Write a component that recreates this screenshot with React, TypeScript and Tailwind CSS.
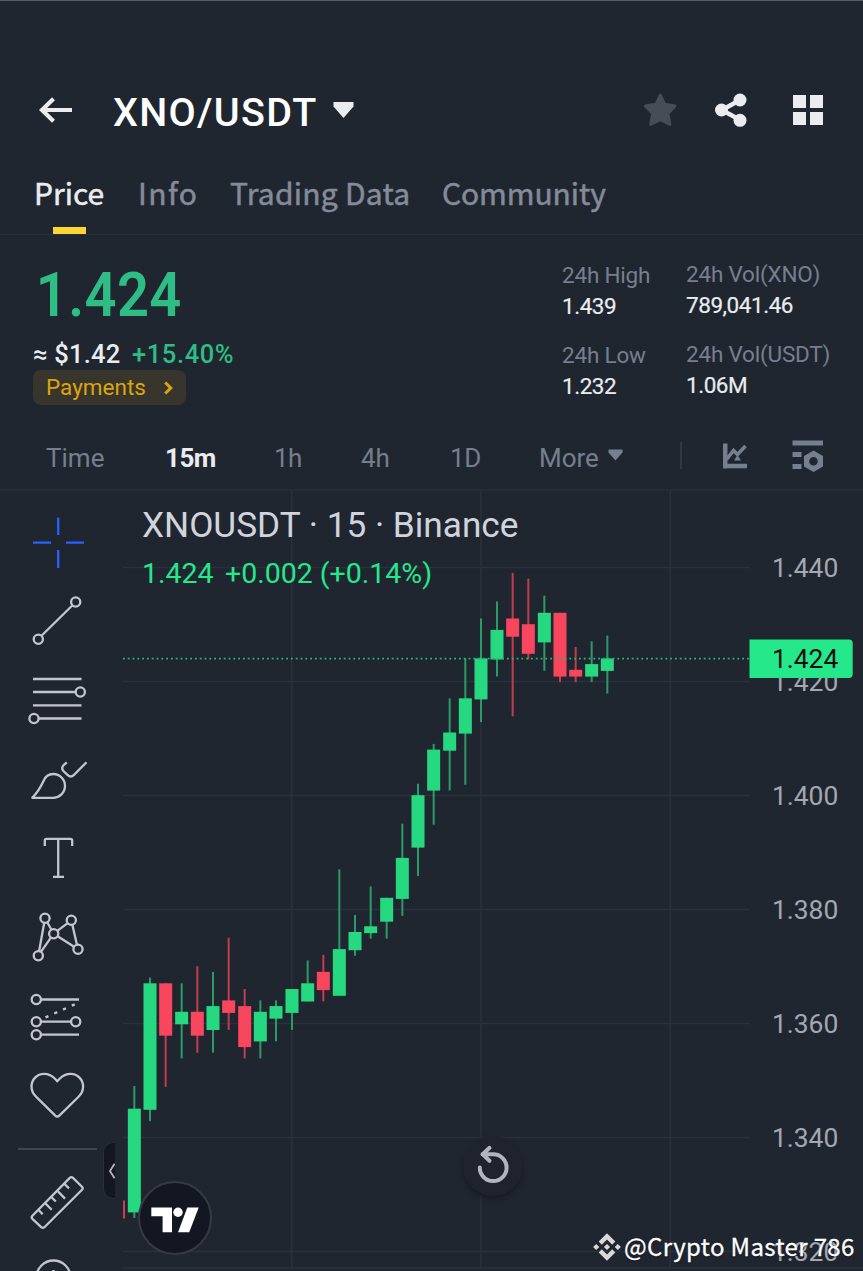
import type { ReactNode } from "react";

//////////////////Header//////////////

const Header = () => {
  return (
    <header className="flex h-[74px] items-center pl-[39px] pr-[40px]">
      <svg width="34" height="26" viewBox="0 0 34 26" fill="none" stroke="#eaecef" strokeWidth="4.2">
        <path d="M14.5 1.8 L3 13 L14.5 24.2 M3.3 13 H33" />
      </svg>
      <h1 className="ml-[40px] mt-[5px] w-[211px] whitespace-nowrap text-[39.5px] font-medium leading-[48px] tracking-[1.3px] text-white">
        XNO/USDT
      </h1>
      <svg className="ml-[9px]" width="22" height="16" viewBox="0 0 22 16" fill="#eaecef">
        <path d="M0.5 0 H20.5 V4.5 L10.5 16 L0.5 4.5 Z" />
      </svg>
      <div className="ml-auto flex items-center">
        <svg width="34" height="34" viewBox="0 0 34 34" fill="#474d57" stroke="#474d57" strokeWidth="3" strokeLinejoin="round">
          <path d="M17.3 2.2 L21.6 11.3 L32 13 L24.9 20.5 L26.9 31.4 L17.3 26.7 L7.7 31.4 L9.7 20.5 L2.3 13 L13 11.3 Z" />
        </svg>
        <svg className="ml-[37px]" width="34" height="34" viewBox="0 0 34 34" fill="#eaecef">
          <path d="M8 17 L26 7 M8 17 L26 27" stroke="#eaecef" strokeWidth="4.4" />
          <circle cx="26" cy="7" r="6.5" />
          <circle cx="7.5" cy="17" r="6.5" />
          <circle cx="26" cy="27.3" r="6.5" />
        </svg>
        <div className="ml-[45px] grid grid-cols-2 gap-[4px]">
          <span className="size-[13px] bg-[#eaecef]" />
          <span className="size-[13px] bg-[#eaecef]" />
          <span className="size-[13px] bg-[#eaecef]" />
          <span className="size-[13px] bg-[#eaecef]" />
        </div>
      </div>
    </header>
  );
};

//////////////////Tabs//////////////

const Tabs = () => {
  return (
    <nav className="flex h-[88px] border-b border-[#2a303b] pl-[34px] pt-[22px] text-[30px] leading-[46px] text-[#848b99] [-webkit-text-stroke:0.5px] [font-family:'Noto_Sans_CJK_SC',sans-serif]">
      <div className="flex w-[104px] flex-col text-[#eaecef]">
        <span className="h-[58px]">Price</span>
        <span className="ml-[19px] h-[7px] w-[33px] bg-[#fcd535]" />
      </div>
      <span className="w-[92px] tracking-[1.4px]">Info</span>
      <span className="w-[212px] tracking-[0.25px]">Trading Data</span>
      <span className="tracking-[-0.1px]">Community</span>
    </nav>
  );
};

//////////////////Ticker summary//////////////

const stats = [
  [
    { label: "24h High", value: "1.439" },
    { label: "24h Low", value: "1.232" },
  ],
  [
    { label: "24h Vol(XNO)", value: "789,041.46" },
    { label: "24h Vol(USDT)", value: "1.06M" },
  ],
];

const Ticker = () => {
  return (
    <section className="flex h-[189px] pl-[33px]">
      <div className="w-[529px]">
        <div className="mt-[25px] h-[70px] origin-left scale-x-[0.92] pl-[3px] text-[61px] font-semibold leading-[70px] tracking-[0.4px] text-[#2ebd85]">
          1.424
        </div>
        <div className="mt-[10px] flex h-[28px] items-center whitespace-nowrap text-[25.5px] font-medium leading-[28px]">
          <span className="w-[99px] tracking-[0.2px] text-[#eaecef]">≈ $1.42</span>
          <span className="tracking-[0.6px] text-[#2ebd85]">+15.40%</span>
        </div>
        <div className="mt-[2px] flex h-[35px] w-[153px] items-center rounded-lg bg-[#38352c] pl-[13px] text-[#dba510]">
          <span className="w-[118px] pb-px text-[22.5px] leading-[30px]">Payments</span>
          <svg width="10" height="14" viewBox="0 0 10 14" fill="none" stroke="#dba510" strokeWidth="3">
            <path d="M1.2 1.5 L6.8 7 L1.2 12.5" />
          </svg>
        </div>
      </div>
      {stats.map((col, i) => (
        <div key={i} className={i === 0 ? "w-[124px] pt-[25px]" : "pt-[24px]"}>
          {col.map((s) => (
            <div key={s.label} className="h-[80px] whitespace-nowrap text-[22.5px]">
              <div className="leading-[31px] tracking-[-0.2px] text-[#767f8e]">{s.label}</div>
              <div className="leading-[31px] tracking-[-0.45px] text-[#eaecef] [-webkit-text-stroke:0.2px]">{s.value}</div>
            </div>
          ))}
        </div>
      ))}
    </section>
  );
};

//////////////////Intervals//////////////

const Intervals = () => {
  return (
    <div className="flex h-[67px] items-center border-b-2 border-[#272d38] pl-[46px] text-[26px] leading-[30px] text-[#767f8e]">
      <span className="mt-[2px] w-[119px]">Time</span>
      <span className="mt-[2px] w-[109px] font-bold tracking-[-0.5px] text-[#eaecef]">15m</span>
      <span className="mt-[2px] w-[87px] tracking-[-0.5px]">1h</span>
      <span className="mt-[2px] w-[89px]">4h</span>
      <span className="mt-[2px] w-[89px] tracking-[-0.4px]">1D</span>
      <span className="mt-[2px] w-[69px]">More</span>
      <svg width="15" height="12" viewBox="0 0 15 12" fill="#767f8e" className="-mt-1">
        <path d="M0.5 0.5 H14.5 V3.5 L7.5 11.5 L0.5 3.5 Z" />
      </svg>
      <span className="-mt-[2px] ml-[57px] h-[27px] w-[2px] bg-[#313742]" />
      <svg className="-mt-[2px] ml-[41px]" width="25" height="26" viewBox="0 0 25 26" fill="none" stroke="#767f8e">
        <path d="M2.2 0.5 V25.5 M0.2 23 H24" strokeWidth="4.6" />
        <path d="M3.5 16.5 L10.5 7.5 L14.5 11.5 L22.5 3" strokeWidth="3.6" />
        <path d="M14.5 12 L18 17.5 H11 Z" fill="#767f8e" stroke="none" />
      </svg>
      <svg className="-mt-[2px] ml-[44px]" width="32" height="34" viewBox="0 0 32 34" fill="#767f8e">
        <rect x="0.5" y="1.5" width="30.5" height="5" />
        <rect x="0.5" y="13" width="9" height="5" />
        <rect x="0.5" y="25" width="9" height="5" />
        <path fillRule="evenodd" d="M21.5 11.5 L31 17 V27.5 L21.5 33 L12 27.5 V17 Z M21.5 18 A4.3 4.3 0 1 0 21.5 26.6 A4.3 4.3 0 1 0 21.5 18 Z" />
      </svg>
    </div>
  );
};

//////////////////Drawing tools//////////////

const Tool = ({ children }: { children: ReactNode }) => (
  <svg
    className="block shrink-0"
    width="64"
    height="79"
    viewBox="0 0 64 79"
    fill="none"
    stroke="#c3c6cf"
    strokeWidth="2.3"
    strokeLinejoin="round"
  >
    {children}
  </svg>
);

const Toolbar = () => {
  return (
    <aside className="flex w-[123px] shrink-0 flex-col pl-[25px] pt-[12px]">
      {/* cross cursor */}
      <Tool>
        <path d="M33.2 14.5 V32 M33.2 47 V65 M8 39.7 H26 M41 39.7 H59" stroke="#2962ff" />
      </Tool>
      {/* trend line */}
      <Tool>
        <path d="M16.5 53.8 L47.5 23.2" />
        <circle cx="50.7" cy="20" r="4.6" />
        <circle cx="13.3" cy="57.3" r="4.6" />
      </Tool>
      {/* fib retracement */}
      <Tool>
        <path d="M8 18 H56.5 M8 31 H50.7 M8 44.3 H56.5 M13.6 57.5 H56.5" />
        <circle cx="55.3" cy="31" r="4.6" />
        <circle cx="9" cy="57.5" r="4.6" />
      </Tool>
      {/* brush */}
      <Tool>
        <path d="M7.3 57.8 C13 52 16 46.5 18.5 41 C20.5 36 24 34 28.2 34 A11.9 11.9 0 0 1 28 57.8 Z" />
        <path d="M41.8 22.3 L38.6 25.2 Q35.9 28 38.4 31 L42.5 34.9 Q45.8 38 49 34.9 L61.5 22.3" />
      </Tool>
      {/* text */}
      <Tool>
        <path d="M19.8 27 V21.5 Q19.8 19.8 21.5 19.8 H45.5 Q47.2 19.8 47.2 21.5 V27 M33.2 19.8 V57.8 M28 57.8 H39" />
      </Tool>
      {/* XABCD pattern */}
      <Tool>
        <path d="M20 20.3 L28.7 35.7 L46.3 22.3 L53 51.3 L28.7 35.7 L13.3 57.7 Z" />
        <g fill="#202630">
          <circle cx="20" cy="20.3" r="4.6" />
          <circle cx="46.3" cy="22.3" r="4.6" />
          <circle cx="28.7" cy="35.7" r="4.6" />
          <circle cx="13.3" cy="57.7" r="4.6" />
          <circle cx="53" cy="51.3" r="4.6" />
        </g>
      </Tool>
      {/* long position */}
      <Tool>
        <path d="M16 22.5 H54 M16 44.7 H46 M16 57.7 H54" />
        <path d="M20.5 40.4 L50.5 27" strokeDasharray="3.2 6.4" strokeWidth="2.4" />
        <circle cx="11.3" cy="22.5" r="4.6" />
        <circle cx="11.3" cy="44.7" r="4.6" />
        <circle cx="50.7" cy="44.7" r="4.6" />
        <circle cx="11.3" cy="57.7" r="4.6" />
      </Tool>
      {/* favourites */}
      <Tool>
        <path d="M32.3 25.3 L30 22.8 C27 19.7 23.3 17.9 19 17.9 C12 17.9 6.5 23.5 6.5 30.5 C6.5 35 8.3 38.2 11.5 41.2 L30.3 59.6 Q32.3 61.3 34.3 59.6 L53.1 41.2 C56.3 38.2 58.1 35 58.1 30.5 C58.1 23.5 52.6 17.9 45.6 17.9 C41.3 17.9 37.6 19.7 34.6 22.8 Z" />
      </Tool>
      <div className="-ml-[7px] mb-[13px] mt-[13px] h-[2px] w-[79px] shrink-0 bg-[#40454f]" />
      {/* ruler */}
      <Tool>
        <path d="M7.4 52.8 L44.8 14.9 Q46.4 13.4 48 14.9 L57 23.7 Q58.4 25.2 57 26.7 L19.4 64.2 Q17.8 65.6 16.2 64.2 L7.4 55.8 Q6 54.3 7.4 52.8 Z" />
        <path d="M13.3 46.8 L17.7 51.2 M20 40 L26.7 46.7 M26.3 34 L30.8 38.5 M32.6 28 L40 35.6 M39.3 20.8 L44 25.4" />
      </Tool>
      {/* zoom in */}
      <Tool>
        <circle cx="28.5" cy="35.5" r="17" />
        <path d="M28.5 28 V43 M21 35.5 H36" />
      </Tool>
    </aside>
  );
};

//////////////////Candles//////////////

// [open, high, low, close] in ticks of 0.001
const candles = [
  [1327, 1349, 1326, 1345],
  [1345, 1368, 1343, 1367],
  [1367, 1367, 1349, 1358],
  [1360, 1367, 1354, 1362],
  [1362, 1370, 1355, 1358],
  [1359, 1369, 1355, 1363],
  [1364, 1375, 1359, 1362],
  [1363, 1366, 1354, 1356],
  [1357, 1364, 1354, 1362],
  [1361, 1364, 1357, 1363],
  [1362, 1366, 1359, 1366],
  [1364, 1371, 1364, 1367],
  [1369, 1372, 1364, 1366],
  [1365, 1387, 1365, 1373],
  [1373, 1379, 1372, 1376],
  [1376, 1384, 1375, 1377],
  [1378, 1382, 1375, 1382],
  [1382, 1395, 1379, 1389],
  [1391, 1402, 1386, 1400],
  [1401, 1409, 1395, 1408],
  [1408, 1417, 1401, 1411],
  [1411, 1424, 1402, 1417],
  [1417, 1431, 1413, 1424],
  [1424, 1434, 1421, 1429],
  [1431, 1439, 1414, 1428],
  [1430, 1438, 1424, 1425],
  [1427, 1435, 1422, 1432],
  [1432, 1432, 1420, 1421],
  [1422, 1426, 1420, 1421],
  [1421, 1427, 1420, 1423],
  [1422, 1428, 1418, 1424],
];

const gridPrices = [1440, 1420, 1400, 1380, 1360, 1340, 1320];
const gridX = [168.7, 358, 547.3];

const toY = (ticks: number) => 76.5 + (1440 - ticks) * 5.7;

const Candles = () => {
  return (
    <svg className="block" width="740" height="780" viewBox="0 0 740 780">
      <g stroke="#2b313c" strokeWidth="1.6">
        {gridX.map((x) => (
          <line key={x} x1={x} x2={x} y1="0" y2="776" />
        ))}
        {gridPrices.map((p) => (
          <line key={p} x1="0" x2="627" y1={toY(p)} y2={toY(p)} />
        ))}
        <line x1="0" x2="740" y1="777" y2="777" />
      </g>

      {/* previous candle, cut by the plot edge */}
      <rect x="0" y="709.5" width="2" height="18" fill="#d23c50" />

      {candles.map(([open, high, low, close], i) => {
        const up = close >= open;
        const x = Math.round((11.2 + i * 15.77) * 3) / 3;
        const top = toY(Math.max(open, close)) - 0.3;
        const bottom = toY(Math.min(open, close)) + 0.8;
        return (
          <g key={i}>
            <rect
              x={x - 1}
              y={toY(high) - 0.3}
              width="2"
              height={toY(low) - toY(high) + 1}
              fill={up ? "#2a9b68" : "#c43c50"}
            />
            <rect x={x - 6.5} y={top} width="13" height={bottom - top} fill={up ? "#26d981" : "#f7465d"} />
          </g>
        );
      })}

      {/* last price */}
      <line x1="0" x2="627" y1={toY(1424)} y2={toY(1424)} stroke="#25b574" strokeWidth="1.8" strokeDasharray="1.8 3" />
      <g fill="#a4a8b2" fontFamily="Roboto, sans-serif" fontSize="26.4">
        {gridPrices.map((p) => (
          <text key={p} x="649" y={toY(p) + 9.7}>
            {(p / 1000).toFixed(3)}
          </text>
        ))}
      </g>
      <path d="M626.5 148.5 H726 Q729.7 148.5 729.7 152.5 V183 Q729.7 187 726 187 H626.5 Z" fill="#25e88a" />
      <text x="649" y="177.3" fill="#0b0e11" fontFamily="Roboto, sans-serif" fontSize="26.4">
        1.424
      </text>
    </svg>
  );
};

const Chart = () => {
  return (
    <main className="relative flex h-[780px] overflow-hidden">
      <Toolbar />
      <Candles />

      <div className="absolute left-[142px] top-[12px] whitespace-nowrap">
        <div className="h-[44px] text-[35.2px] leading-[44px] text-[#d1d4dc]">XNOUSDT · 15 · Binance</div>
        <div className="mt-[10px] flex h-[34px] text-[28.5px] leading-[34px] text-[#25e88a]">
          <span className="w-[83px]">1.424</span>
          <span>+0.002 (+0.14%)</span>
        </div>
      </div>

      {/* toolbar collapse handle */}
      <div className="absolute left-[103px] top-[651px] flex h-[57px] w-[12px] items-center justify-end rounded-l-[10px] border border-r-0 border-[#2a2e39] bg-[#131722]">
        <svg width="7" height="16" viewBox="0 0 7 16" fill="none" stroke="#b2b5be" strokeWidth="1.8">
          <path d="M6.5 0.8 L2 8 L6.5 15.2" />
        </svg>
      </div>

      <div className="absolute left-[138px] top-[690px] flex size-[74px] items-center justify-center rounded-full border-2 border-[#363a45] bg-[#131722]">
        <svg className="mt-[3px]" width="48" height="26" viewBox="0 0 48 26" fill="#fff">
          <path d="M0.3 0.5 H21 V25.2 H11.6 V9.3 H0.3 Z" />
          <circle cx="27" cy="5.2" r="4.7" />
          <path d="M36.3 0.5 H47.7 L38.2 25.2 H27 Z" />
        </svg>
      </div>

      <div className="absolute left-[463px] top-[645px] flex size-[60px] items-center justify-center rounded-full bg-[#1f232e] shadow-[0_3px_5px_#171b25]">
        <svg width="40" height="44" viewBox="0 0 40 44" fill="none" stroke="#b2b5be" strokeWidth="4" strokeLinecap="round" strokeLinejoin="round">
          <path d="M6.8 23.5 A13.4 13.4 0 1 0 20 10.3 H9.5" />
          <path d="M16.5 3.8 L9.8 10.3 L16.5 16.8" />
        </svg>
      </div>

      <div className="absolute left-[593px] top-[737px] flex h-[38px] items-center whitespace-nowrap">
        <svg width="28" height="28" viewBox="0 0 28 28" fill="#d9d9d9">
          <path d="M14 0.3 L22.3 8.6 L19.2 11.7 L14 6.5 L8.8 11.7 L5.7 8.6 Z" />
          <path d="M14 27.7 L22.3 19.4 L19.2 16.3 L14 21.5 L8.8 16.3 L5.7 19.4 Z" />
          <path d="M3.2 10.9 L6.3 14 L3.2 17.1 L0.1 14 Z M24.8 10.9 L27.9 14 L24.8 17.1 L21.7 14 Z M14 10.9 L17.1 14 L14 17.1 L10.9 14 Z" />
        </svg>
        <span className="-mt-[3px] ml-[3px] text-[24px] leading-[38px] tracking-[0.38px] text-white [-webkit-text-stroke:0.3px] [font-family:'Noto_Sans_CJK_SC',sans-serif] [text-shadow:0_1px_2px_#0008]">
          @Crypto Master 786
        </span>
      </div>
    </main>
  );
};

export default function App() {
  return (
    <div className="h-[1271px] w-[863px] overflow-hidden border-t border-[#575c66] bg-[#202630] pt-[72px] [font-family:Roboto,sans-serif]">
      <Header />
      <Tabs />
      <Ticker />
      <Intervals />
      <Chart />
    </div>
  );
}
